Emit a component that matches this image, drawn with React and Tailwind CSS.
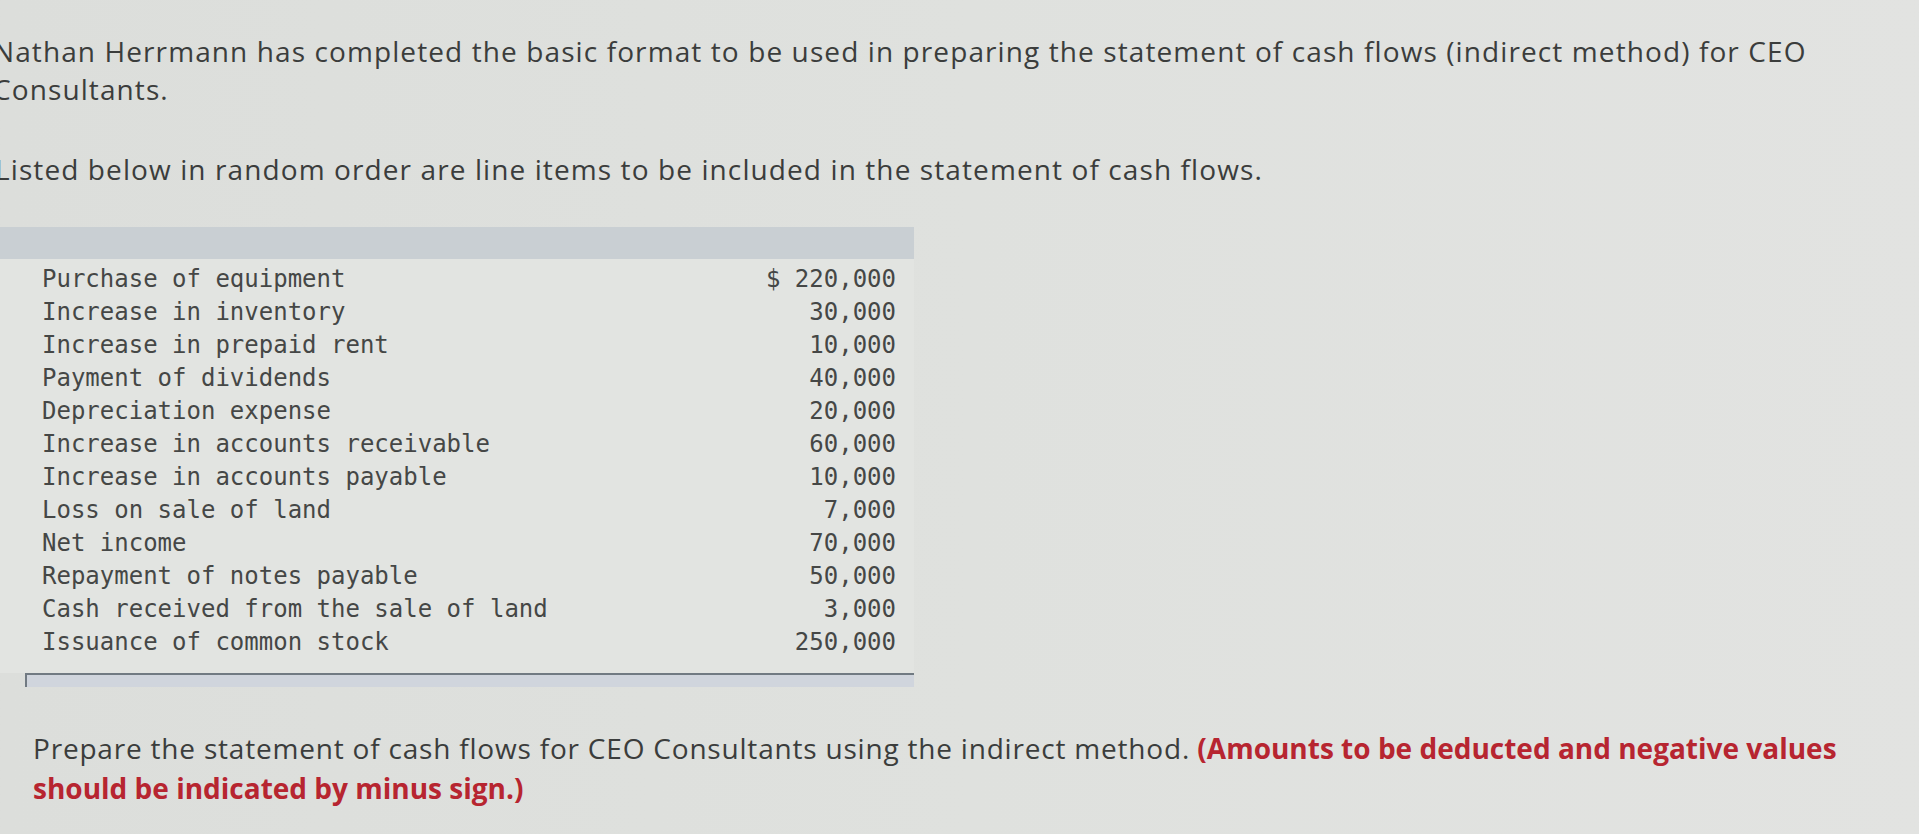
import React from "react";

const items = [
  ["Purchase of equipment", "$ 220,000"],
  ["Increase in inventory", "30,000"],
  ["Increase in prepaid rent", "10,000"],
  ["Payment of dividends", "40,000"],
  ["Depreciation expense", "20,000"],
  ["Increase in accounts receivable", "60,000"],
  ["Increase in accounts payable", "10,000"],
  ["Loss on sale of land", "7,000"],
  ["Net income", "70,000"],
  ["Repayment of notes payable", "50,000"],
  ["Cash received from the sale of land", "3,000"],
  ["Issuance of common stock", "250,000"],
];

export default function App() {
  return (
    <div className="min-h-[834px] w-full overflow-hidden bg-gradient-to-r from-[#dcdedb] via-[#dfe1de] to-[#e2e3e1] font-['Open_Sans',sans-serif] text-[#3b3d3c]">
      {/* Intro */}
      <p className="-ml-[7px] pt-[32px] max-w-[1840px] text-[28px] leading-[38px] tracking-[1.1px]">
        Nathan Herrmann has completed the basic format to be used in preparing the statement of cash flows (indirect method) for CEO Consultants.
      </p>
      <p className="-ml-[5px] mt-[42px] text-[28px] leading-[38px] tracking-[1.1px]">
        Listed below in random order are line items to be included in the statement of cash flows.
      </p>

      {/* Line items table */}
      <div className="mt-[39px] w-[914px]">
        <div className="h-[32px] bg-[#c9cfd3]" />
        <div className="bg-[#e2e4e1] pt-[4px] pb-[14px] pl-[42px] pr-[18px] font-['DejaVu_Sans_Mono',monospace] text-[24px] leading-[33px] text-[#454746]">
          {items.map(([label, amount]) => (
            <div key={label} className="flex justify-between whitespace-pre">
              <span>{label}</span>
              <span>{amount}</span>
            </div>
          ))}
        </div>
        <div className="ml-[25px] h-[14px] border-t-2 border-l-2 border-[#717a82] bg-[#d0d5dd]" />
      </div>

      {/* Instruction */}
      <p className="mt-[41px] pl-[33px] max-w-[1860px] text-[28px] leading-[40px]">
        <span className="tracking-[0.8px]">
          Prepare the statement of cash flows for CEO Consultants using the indirect method.
        </span>{" "}
        <span className="font-bold text-[#b72530]">
          (Amounts to be deducted and negative values should be indicated by minus sign.)
        </span>
      </p>
    </div>
  );
}
